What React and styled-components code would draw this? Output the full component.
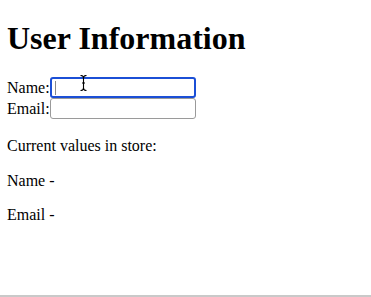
import React from "react";
import styled, { createGlobalStyle } from "styled-components";

const Global = createGlobalStyle`
  html, body {
    margin: 0;
    padding: 0;
    background: #fff;
  }
  body {
    font-family: "Liberation Serif", "Times New Roman", serif;
    font-size: 16px;
    color: #000;
  }
`;

const Frame = styled.div`
  box-sizing: border-box;
  height: 297px;
  padding: 0 7px;
  border-bottom: 2px solid #c9c9c9;
  overflow: hidden;
  display: flow-root;
`;

const Title = styled.h1`
  font-size: 32px;
  font-weight: bold;
  margin: 20px 0 20px;
  line-height: 37px;
`;

const Form = styled.form`
  margin: 0 0 18px;
`;

const Row = styled.div`
  display: flex;
  align-items: center;
  height: 21px;
`;

const Label = styled.label`
  line-height: 18px;
`;

const FieldWrap = styled.span`
  position: relative;
  display: inline-block;
`;

const Input = styled.input`
  box-sizing: border-box;
  width: 146px;
  height: 21px;
  margin: 0;
  padding: 0 3px;
  font: inherit;
  border-radius: 3px;
  outline: none;
  background: #fff;
  border: ${(p) => (p.$focused ? "2px solid #1b4fd6" : "1px solid #9a9a9a")};
`;

const Caret = styled.span`
  position: absolute;
  left: 5px;
  top: 4px;
  width: 1px;
  height: 14px;
  background: #8a8a8a;
`;

const Pointer = styled.svg`
  position: absolute;
  left: 30px;
  top: -2px;
`;

const Text = styled.p`
  margin: 0 0 16px;
  line-height: 18.5px;
`;

export default function App() {
  return (
    <>
      <Global />
      <Frame>
        <Title>User Information</Title>
        <Form>
          <Row>
            <Label htmlFor="name">Name:</Label>
            <FieldWrap>
              <Input id="name" $focused />
              <Caret />
              <Pointer width="7" height="16" viewBox="0 0 7 16">
                <path
                  d="M0.5 0.5 Q3.5 0.5 3.5 3 L3.5 13 Q3.5 15.5 0.5 15.5 M6.5 0.5 Q3.5 0.5 3.5 3 M3.5 13 Q3.5 15.5 6.5 15.5 M2 8 L5 8"
                  fill="none"
                  stroke="#000"
                  strokeWidth="1.1"
                />
              </Pointer>
            </FieldWrap>
          </Row>
          <Row>
            <Label htmlFor="email">Email:</Label>
            <Input id="email" />
          </Row>
        </Form>
        <Text>Current values in store:</Text>
        <Text>Name - </Text>
        <Text>Email - </Text>
      </Frame>
    </>
  );
}
